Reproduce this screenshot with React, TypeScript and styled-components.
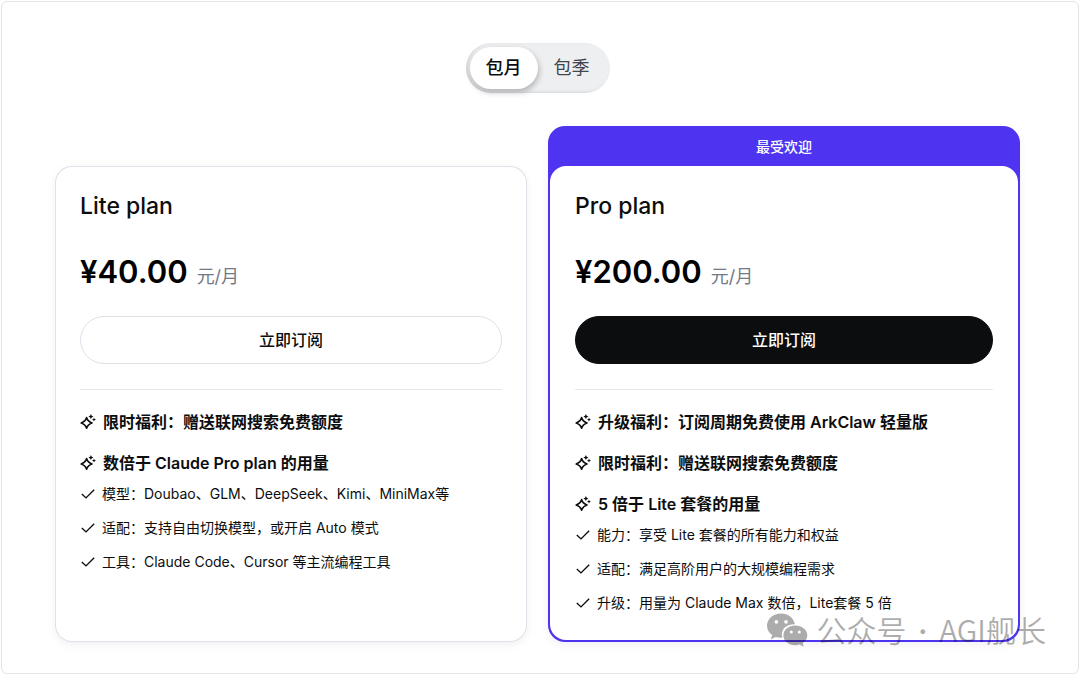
import React, { useState } from "react";
import styled, { createGlobalStyle, css } from "styled-components";

const GlobalStyle = createGlobalStyle`
  *, *::before, *::after { box-sizing: border-box; }
  body {
    margin: 0;
    background: #fff;
    color: #0c0d0e;
    font-family: Inter, "Noto Sans CJK SC", sans-serif;
  }
  h2, p, ul { margin: 0; padding: 0; }
  ul { list-style: none; }
  button { font-family: inherit; cursor: pointer; }
`;

const Frame = styled.main`
  position: relative;
  margin: 1px;
  padding: 41px 58px 31px 53px;
  border: 1px solid #e2e3e5;
  border-radius: 6px;
  display: flex;
  flex-direction: column;
  gap: 33px;
`;

const Toggle = styled.div`
  align-self: center;
  display: flex;
  padding: 4px;
  border-radius: 25px;
  background: #eeeff1;
  box-shadow: inset 2px -1px 3px rgba(60, 66, 80, 0.14);
`;

const ToggleOption = styled.button<{ $active: boolean }>`
  height: 42px;
  padding: 0 16px;
  border: 0;
  border-radius: 21px;
  background: transparent;
  color: #42464e;
  font-size: 18px;
  line-height: 24px;
  font-weight: 400;
  ${(p) =>
    p.$active &&
    css`
      background: #fff;
      color: #0c0d0e;
      font-weight: 500;
      box-shadow: 1px 3px 6px rgba(0, 0, 0, 0.26);
    `}
`;

const Plans = styled.div`
  display: grid;
  grid-template-columns: 1fr 1fr;
  gap: 21px;
  align-items: end;
`;

const PlanShell = styled.section<{ $featured?: boolean }>`
  min-width: 0;
  border-radius: 17px;
  box-shadow: 0 3px 10px rgba(20, 25, 50, 0.06);
  ${(p) =>
    p.$featured
      ? css`
          padding: 0 2px 2px;
          background: #4e34f0;
        `
      : css`
          padding: 1px;
          background: #dde1e8;
        `}
`;

const Ribbon = styled.p`
  padding: 11px 0 9px;
  color: #fff;
  font-size: 14px;
  line-height: 20px;
  font-weight: 500;
  text-align: center;
`;

const PlanBody = styled.div<{ $featured?: boolean }>`
  min-height: 474px;
  padding: ${(p) => (p.$featured ? "24px 25px" : "23px 24px")};
  border-radius: 16px;
  background: #fff;
`;

const PlanName = styled.h2`
  font-size: 23px;
  line-height: 32px;
  font-weight: 500;
`;

const Price = styled.p`
  display: flex;
  align-items: baseline;
  gap: 9px;
  margin: 30px 0 24px;
  height: 40px;
  color: #000;
  font-size: 31px;
  line-height: 40px;
  font-weight: 600;
`;

const Unit = styled.span`
  color: #737a87;
  font-size: 18px;
  font-weight: 400;
`;

const Subscribe = styled.button<{ $featured?: boolean }>`
  display: block;
  width: 100%;
  height: 48px;
  border: 1px solid ${(p) => (p.$featured ? "#0c0d0e" : "#dde1e8")};
  border-radius: 24px;
  background: ${(p) => (p.$featured ? "#0c0d0e" : "#fff")};
  color: ${(p) => (p.$featured ? "#fff" : "#0c0d0e")};
  font-size: 16px;
  line-height: 24px;
  font-weight: 500;
`;

const Benefits = styled.ul`
  display: flex;
  flex-direction: column;
  gap: 17px;
  margin-top: 25px;
  padding-top: 20px;
  border-top: 1px solid #e6e7e9;
`;

const Headline = styled.p`
  display: flex;
  align-items: center;
  gap: 7px;
  font-size: 16px;
  line-height: 24px;
  font-weight: 600;
  white-space: nowrap;
`;

const Details = styled.ul`
  display: flex;
  flex-direction: column;
  gap: 12px;
  margin-top: 8px;
`;

const Detail = styled.li`
  display: flex;
  align-items: center;
  gap: 6px;
  font-size: 14px;
  line-height: 22px;
  white-space: nowrap;
`;

const Icon = styled.svg`
  flex: none;
  width: 16px;
  height: 16px;
  fill: none;
  stroke: currentColor;
`;

const Watermark = styled.div`
  position: absolute;
  right: 32px;
  bottom: 22px;
  display: flex;
  align-items: center;
  gap: 8px;
  color: #000;
  opacity: 0.32;
  font-family: "Noto Sans CJK SC", sans-serif;
  font-size: 30px;
  line-height: 40px;
  font-weight: 350;
  white-space: nowrap;
  pointer-events: none;
`;

const Dot = styled.span`
  margin: 0 4px;
  font-family: Inter, sans-serif;
  font-weight: 600;
`;

const SparkIcon = () => (
  <Icon viewBox="0 0 16 16" strokeWidth="1.6" strokeLinejoin="round" aria-hidden="true">
    <path d="M6.6 3.5C7.5 6.8 8.6 7.9 12 8.9C8.6 9.9 7.5 11 6.6 14.3C5.7 11 4.6 9.9 1.2 8.9C4.6 7.9 5.7 6.8 6.6 3.5Z" />
    <path
      d="M10.9 .1L11.7 1.8L13.4 2.6L11.7 3.4L10.9 5.1L10.1 3.4L8.4 2.6L10.1 1.8ZM14 3.6L14.6 5L16 5.6L14.6 6.2L14 7.6L13.4 6.2L12 5.6L13.4 5Z"
      fill="currentColor"
      stroke="none"
    />
  </Icon>
);

const CheckIcon = () => (
  <Icon viewBox="0 0 16 16" strokeWidth="1.4" aria-hidden="true">
    <path d="M1.8 8L6 11.9L14.2 3.7" />
  </Icon>
);

const WechatMark = () => (
  <svg width="42" height="34" viewBox="0 0 42 34" fill="currentColor" aria-hidden="true">
    <path
      fillRule="evenodd"
      d="M15.2 .5C7 .5 1 6 1 12.7C1 16.6 3 19.9 6.2 22.1L4.8 26.5L9.8 23.9C11.7 24.5 13.8 24.8 16.4 24.6C14 16.8 20 11.1 28.9 11.3C27.8 5 22.1 .5 15.2 .5ZM10.4 7.1A1.8 1.8 0 1 1 10.4 10.7A1.8 1.8 0 0 1 10.4 7.1ZM20 7.1A1.8 1.8 0 1 1 20 10.7A1.8 1.8 0 0 1 20 7.1Z"
    />
    <path
      fillRule="evenodd"
      d="M29.3 12.4C22.5 12.4 17.4 16.8 17.4 22.3C17.4 27.9 22.5 32.3 29.3 32.3C30.8 32.3 32.3 32 33.6 31.6L37.7 33.8L36.6 30.1C39.6 28.3 41.3 25.5 41.3 22.3C41.3 16.8 36 12.4 29.3 12.4ZM25.3 17.6A1.5 1.5 0 1 1 25.3 20.6A1.5 1.5 0 0 1 25.3 17.6ZM33.3 17.6A1.5 1.5 0 1 1 33.3 20.6A1.5 1.5 0 0 1 33.3 17.6Z"
    />
  </svg>
);

interface Benefit {
  title: string;
  details?: string[];
}

interface Plan {
  name: string;
  price: string;
  ribbon?: string;
  benefits: Benefit[];
}

const plans: Plan[] = [
  {
    name: "Lite plan",
    price: "¥40.00",
    benefits: [
      { title: "限时福利：赠送联网搜索免费额度" },
      {
        title: "数倍于 Claude Pro plan 的用量",
        details: [
          "模型：Doubao、GLM、DeepSeek、Kimi、MiniMax等",
          "适配：支持自由切换模型，或开启 Auto 模式",
          "工具：Claude Code、Cursor 等主流编程工具",
        ],
      },
    ],
  },
  {
    name: "Pro plan",
    price: "¥200.00",
    ribbon: "最受欢迎",
    benefits: [
      { title: "升级福利：订阅周期免费使用 ArkClaw 轻量版" },
      { title: "限时福利：赠送联网搜索免费额度" },
      {
        title: "5 倍于 Lite 套餐的用量",
        details: [
          "能力：享受 Lite 套餐的所有能力和权益",
          "适配：满足高阶用户的大规模编程需求",
          "升级：用量为 Claude Max 数倍，Lite套餐 5 倍",
        ],
      },
    ],
  },
];

const PlanCard = ({ plan }: { plan: Plan }) => {
  const featured = Boolean(plan.ribbon);
  return (
    <PlanShell $featured={featured}>
      {plan.ribbon && <Ribbon>{plan.ribbon}</Ribbon>}
      <PlanBody $featured={featured}>
        <PlanName>{plan.name}</PlanName>
        <Price>
          {plan.price}
          <Unit>元/月</Unit>
        </Price>
        <Subscribe type="button" $featured={featured}>
          立即订阅
        </Subscribe>
        <Benefits>
          {plan.benefits.map((b) => (
            <li key={b.title}>
              <Headline>
                <SparkIcon />
                {b.title}
              </Headline>
              {b.details && (
                <Details>
                  {b.details.map((d) => (
                    <Detail key={d}>
                      <CheckIcon />
                      {d}
                    </Detail>
                  ))}
                </Details>
              )}
            </li>
          ))}
        </Benefits>
      </PlanBody>
    </PlanShell>
  );
};

const periods = ["包月", "包季"];

export default function App() {
  const [period, setPeriod] = useState(periods[0]);
  return (
    <>
      <GlobalStyle />
      <Frame>
        <Toggle role="group">
          {periods.map((p) => (
            <ToggleOption
              key={p}
              type="button"
              $active={p === period}
              aria-pressed={p === period}
              onClick={() => setPeriod(p)}
            >
              {p}
            </ToggleOption>
          ))}
        </Toggle>
        <Plans>
          {plans.map((plan) => (
            <PlanCard key={plan.name} plan={plan} />
          ))}
        </Plans>
        <Watermark>
          <WechatMark />
          <span>
            公众号<Dot> · </Dot>AGI舰长
          </span>
        </Watermark>
      </Frame>
    </>
  );
}
